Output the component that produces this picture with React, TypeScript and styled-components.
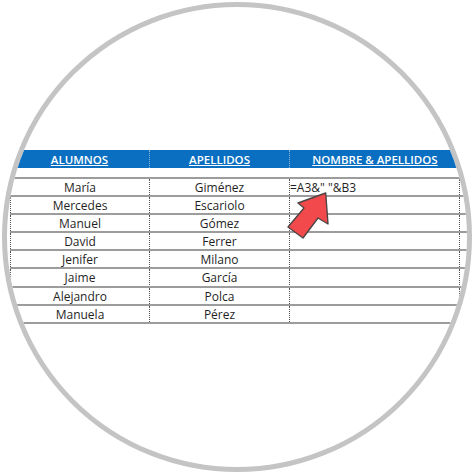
import React from 'react';
import styled, { createGlobalStyle } from 'styled-components';

const GlobalStyle = createGlobalStyle`
  html, body {
    margin: 0;
    padding: 0;
    background: #fff;
  }
`;

const Page = styled.div`
  width: 474px;
  height: 474px;
  display: flex;
  align-items: center;
  justify-content: center;
  background: #fff;
`;

const Circle = styled.div`
  position: relative;
  width: 470px;
  height: 470px;
  box-sizing: border-box;
  border: 5px solid #c4c4c4;
  border-radius: 50%;
  overflow: hidden;
  padding-top: 143px;
  background: #fff;
`;

const Sheet = styled.div`
  display: flex;
  flex-direction: column;
  width: 460px;
  font-family: 'Open Sans', 'Noto Sans', sans-serif;
`;

const HeaderRow = styled.div`
  display: grid;
  grid-template-columns: 139px 140px 171px;
  height: 18px;
  margin-bottom: 9px;
  padding-left: 3px;
  background: #0a6fc0;
`;

const HeaderCell = styled.div<{ $first?: boolean }>`
  display: flex;
  align-items: center;
  justify-content: center;
  color: #fff;
  font-size: 11.5px;
  font-weight: 600;
  text-decoration: underline;
  border-left: ${(p) => (p.$first ? 'none' : '1px dotted #8fb8d8')};
`;

const Row = styled.div`
  display: grid;
  grid-template-columns: 139px 140px 171px;
  height: 18.1px;
  box-sizing: border-box;
  margin-left: 3px;
  border-top: 2px solid #9c9c9c;
`;

const LastLine = styled.div`
  height: 2px;
  margin-left: 3px;
  background: #9c9c9c;
`;

const Cell = styled.div<{ $left?: boolean }>`
  display: flex;
  align-items: center;
  justify-content: ${(p) => (p.$left ? 'flex-start' : 'center')};
  padding-bottom: 1px;
  color: #1f1f1f;
  font-size: 12px;
  white-space: nowrap;
  border-left: 1px dotted #555;
  border-right: ${(p) => (p.$left ? '1px dotted #555' : 'none')};
`;

const Arrow = styled.svg`
  position: absolute;
  left: 272px;
  top: 174px;
  width: 50px;
  height: 60px;
`;

const students = [
  ['María', 'Giménez', '=A3&" "&B3'],
  ['Mercedes', 'Escariolo', ''],
  ['Manuel', 'Gómez', ''],
  ['David', 'Ferrer', ''],
  ['Jenifer', 'Milano', ''],
  ['Jaime', 'García', ''],
  ['Alejandro', 'Polca', ''],
  ['Manuela', 'Pérez', ''],
];

export default function App() {
  return (
    <Page>
      <GlobalStyle />
      <Circle>
        <Sheet>
          <HeaderRow>
            <HeaderCell $first>ALUMNOS</HeaderCell>
            <HeaderCell>APELLIDOS</HeaderCell>
            <HeaderCell>NOMBRE &amp; APELLIDOS</HeaderCell>
          </HeaderRow>
          {students.map((s) => (
            <Row key={s[0]}>
              <Cell>{s[0]}</Cell>
              <Cell>{s[1]}</Cell>
              <Cell $left>{s[2]}</Cell>
            </Row>
          ))}
          <LastLine />
        </Sheet>
        <Arrow viewBox="0 0 50 60">
          <path
            d="M46.7 12 L19 22 L25 27 L9 46 L24 57 L39 37 L49 43 Z"
            fill="#f24a4c"
            stroke="#4f4444"
            strokeWidth="1.4"
            strokeLinejoin="round"
          />
        </Arrow>
      </Circle>
    </Page>
  );
}
